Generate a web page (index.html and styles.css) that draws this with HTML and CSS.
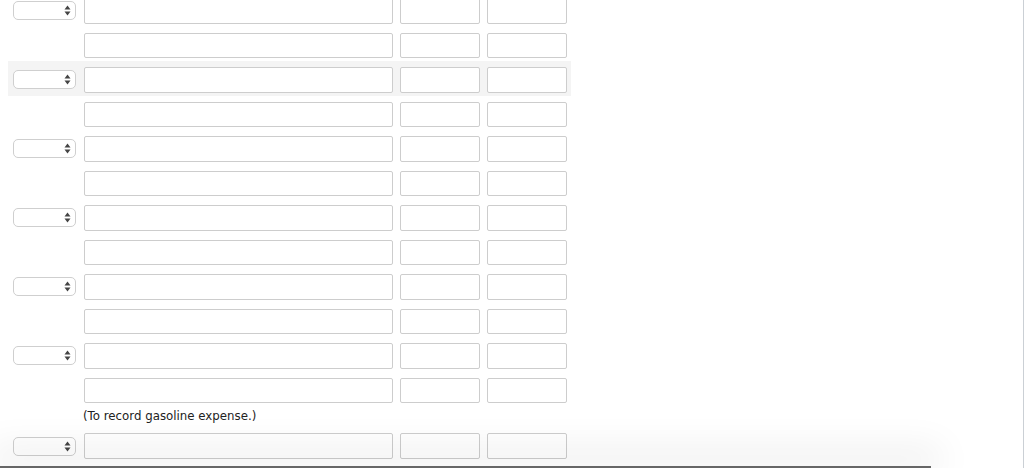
FILE: index.html
```html
<!DOCTYPE html>
<html>
<head>
<meta charset="utf-8">
<link rel="stylesheet" href="styles.css">
</head>
<body>
<div class="sheet">
  <div class="row"><div class="sel"><svg class="arr" width="7" height="11" viewBox="0 0 7 11"><path d="M3.5 0.5L6.5 4.5H0.5Z M3.5 10.5L6.5 6.5H0.5Z" fill="#444"/></svg></div><div class="inp wide"></div><div class="inp num"></div><div class="inp num"></div></div>
  <div class="row"><div class="blank"></div><div class="inp wide"></div><div class="inp num"></div><div class="inp num"></div></div>
  <div class="row hl"><div class="sel"><svg class="arr" width="7" height="11" viewBox="0 0 7 11"><path d="M3.5 0.5L6.5 4.5H0.5Z M3.5 10.5L6.5 6.5H0.5Z" fill="#444"/></svg></div><div class="inp wide"></div><div class="inp num"></div><div class="inp num"></div></div>
  <div class="row"><div class="blank"></div><div class="inp wide"></div><div class="inp num"></div><div class="inp num"></div></div>
  <div class="row"><div class="sel"><svg class="arr" width="7" height="11" viewBox="0 0 7 11"><path d="M3.5 0.5L6.5 4.5H0.5Z M3.5 10.5L6.5 6.5H0.5Z" fill="#444"/></svg></div><div class="inp wide"></div><div class="inp num"></div><div class="inp num"></div></div>
  <div class="row"><div class="blank"></div><div class="inp wide"></div><div class="inp num"></div><div class="inp num"></div></div>
  <div class="row"><div class="sel"><svg class="arr" width="7" height="11" viewBox="0 0 7 11"><path d="M3.5 0.5L6.5 4.5H0.5Z M3.5 10.5L6.5 6.5H0.5Z" fill="#444"/></svg></div><div class="inp wide"></div><div class="inp num"></div><div class="inp num"></div></div>
  <div class="row"><div class="blank"></div><div class="inp wide"></div><div class="inp num"></div><div class="inp num"></div></div>
  <div class="row"><div class="sel"><svg class="arr" width="7" height="11" viewBox="0 0 7 11"><path d="M3.5 0.5L6.5 4.5H0.5Z M3.5 10.5L6.5 6.5H0.5Z" fill="#444"/></svg></div><div class="inp wide"></div><div class="inp num"></div><div class="inp num"></div></div>
  <div class="row"><div class="blank"></div><div class="inp wide"></div><div class="inp num"></div><div class="inp num"></div></div>
  <div class="row"><div class="sel"><svg class="arr" width="7" height="11" viewBox="0 0 7 11"><path d="M3.5 0.5L6.5 4.5H0.5Z M3.5 10.5L6.5 6.5H0.5Z" fill="#444"/></svg></div><div class="inp wide"></div><div class="inp num"></div><div class="inp num"></div></div>
  <div class="row"><div class="blank"></div><div class="inp wide"></div><div class="inp num"></div><div class="inp num"></div></div>
  <div class="note">(To record gasoline expense.)</div>
  <div class="row"><div class="sel"><svg class="arr" width="7" height="11" viewBox="0 0 7 11"><path d="M3.5 0.5L6.5 4.5H0.5Z M3.5 10.5L6.5 6.5H0.5Z" fill="#444"/></svg></div><div class="inp wide"></div><div class="inp num"></div><div class="inp num"></div></div>
</div>
<div class="footer-edge"></div>
<div class="right-edge"></div>
</body>
</html>
```
FILE: styles.css
```css
html, body {
  margin: 0;
  padding: 0;
  background: #fff;
  overflow: hidden;
  height: 468px;
}
body {
  font-family: "DejaVu Sans", Verdana, sans-serif;
  color: #222;
}
.sheet {
  margin-top: -8px;
  padding-left: 8px;
  width: 563px;
}
.row {
  height: 34.5px;
  box-sizing: border-box;
  padding: 6px 4px 3px 5px;
  display: flex;
  align-items: center;
}
.row.hl {
  background: #f4f4f4;
}
.sel {
  width: 63px;
  height: 19px;
  box-sizing: border-box;
  border: 1px solid #cfcfcf;
  border-radius: 5px;
  background: #fff;
  margin-right: 8px;
  position: relative;
  flex: none;
}
.arr {
  position: absolute;
  right: 4px;
  top: 3px;
}
.blank {
  width: 63px;
  margin-right: 8px;
  flex: none;
}
.inp {
  height: 25.5px;
  box-sizing: border-box;
  border: 1px solid #cdcdcd;
  border-radius: 2px;
  background: #fff;
  flex: none;
  margin-right: 7px;
}
.inp:last-child {
  margin-right: 0;
}
.inp.wide { width: 309px; }
.inp.num { width: 80px; }
.note {
  height: 21.3px;
  line-height: 20px;
  padding-left: 75px;
  font-size: 11.8px;
  color: #222;
}
.footer-edge {
  position: fixed;
  left: 0;
  bottom: 0;
  width: 931px;
  height: 2px;
  background: #666;
  box-shadow: 0 -8px 36px 10px rgba(0, 0, 0, 0.08);
}
.right-edge {
  position: fixed;
  right: 0;
  top: 0;
  width: 1px;
  height: 468px;
  background: #cbd0d5;
}
```
